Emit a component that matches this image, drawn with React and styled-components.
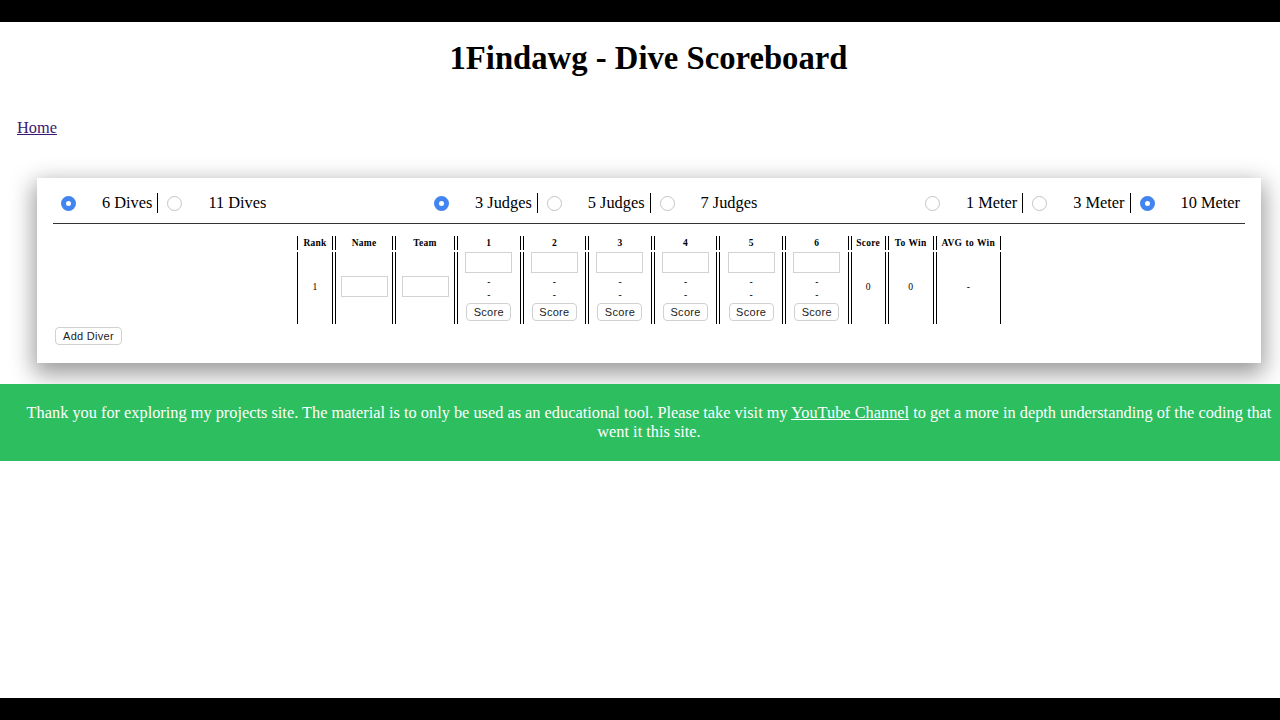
import React from "react";
import styled, { createGlobalStyle } from "styled-components";

const Global = createGlobalStyle`
  html, body { margin: 0; padding: 0; background: #fff; }
  body { font-family: "Liberation Serif", "Times New Roman", serif; color: #000; }
`;
const Frame = styled.div`
  display: flex; flex-direction: column; width: 1280px; height: 720px; overflow: hidden; background: #fff;
`;
const Letterbox = styled.div`
  flex: 0 0 22px; background: #000;
`;
const Page = styled.main`
  flex: 1; display: flex; flex-direction: column;
`;
const Title = styled.h1`
  margin: 0; padding: 16px 0 0 17px; height: 54px; box-sizing: content-box;
  font-size: 32.7px; line-height: 40px; font-weight: 700; text-align: center;
`;
const Nav = styled.nav`
  padding: 26px 0 0 17px; height: 60px; font-size: 16.35px; line-height: 20px;
`;
const HomeLink = styled.a`
  color: #3d1674; text-decoration: underline;
`;
const Card = styled.section`
  margin: 0 19px 0 37px; height: 185px; box-sizing: border-box; padding: 14px 16px 0;
  background: #fff; box-shadow: 0 8px 22px 3px rgba(0,0,0,.4);
`;
const OptionBar = styled.div`
  display: flex; justify-content: space-between; height: 31px; border-bottom: 1px solid #333;
`;
const OptionGroup = styled.div`
  display: flex; align-items: flex-start; padding-top: 1px;
`;
const Option = styled.label`
  display: flex; align-items: center; height: 20px; padding: 0 5px 0 ${p => p.$first ? 8 : 9}px;
  font-size: 16.35px; line-height: 20px; border-left: ${p => p.$first ? "0" : "1px solid #000"};
`;
const Radio = styled.input`
  appearance: none; width: 15px; height: 15px; margin: 0 26px 0 0; box-sizing: border-box; border-radius: 50%;
  background: #fff; border: 1px solid #c4c4c4; flex: none;
  &:checked { border: 5px solid #4285f0; background: #fff; }
`;
const ScoreTable = styled.table`
  margin: 10px auto 0; border-collapse: separate; border-spacing: 2px; width: 708px; table-layout: fixed;
  font-size: 9.6px;
`;
const Head = styled.th`
  height: 14px; padding: 0; border-left: 1px solid #000; border-right: 1px solid #000;
  font-size: 9.5px; line-height: 14px; font-weight: 700; letter-spacing: .25px; word-spacing: .6px;
  white-space: nowrap; width: ${p => p.$w}px;
`;
const Cell = styled.td`
  height: ${p => p.$stack ? 72 : 69}px; padding: 0 0 ${p => p.$stack ? 0 : 3}px; border-left: 1px solid #000; border-right: 1px solid #000;
  font-size: 9.6px; text-align: center; vertical-align: middle;
`;
const ScoreStack = styled.div`
  display: flex; flex-direction: column; align-items: center; height: 72px;
`;
const Dashes = styled.div`
  display: flex; flex-direction: column; margin-top: 2px;
`;
const Dash = styled.span`
  height: 13px; line-height: 13px;
`;
const Field = styled.input`
  display: block; width: 47px; height: 21px; margin: 0 auto; padding: 0; box-sizing: border-box;
  border: 1px solid #d2d2d2; background: #fff;
`;
const Button = styled.button`
  display: block; height: 18px; padding: 0; box-sizing: border-box; background: #fff;
  border: 1px solid #d0d0d0; border-radius: 4px; color: #222;
  font-family: "Liberation Sans", Arial, sans-serif; font-size: 11px; line-height: 16px; letter-spacing: .3px;
  width: ${p => p.$w}px;
`;
const ScoreButton = styled(Button)`
  margin-top: 2px;
`;
const AddButton = styled(Button)`
  margin: 1px 0 0 2px;
`;
const Footer = styled.footer`
  margin-top: 21px; height: 77px; box-sizing: border-box; padding: 19px 7px 0 25px;
  background: #2dbe5f; color: #fff; font-size: 16.33px; line-height: 19px; text-align: center;
`;
const FooterLink = styled.a`
  color: #fff; text-decoration: underline;
`;

const groups = [
  [["6 Dives", true], ["11 Dives", false]],
  [["3 Judges", true], ["5 Judges", false], ["7 Judges", false]],
  [["1 Meter", false], ["3 Meter", false], ["10 Meter", true]],
];
const dives = [1, 2, 3, 4, 5, 6];

export default function App() {
  return (
    <Frame>
      <Global />
      <Letterbox />
      <Page>
        <Title>1Findawg - Dive Scoreboard</Title>
        <Nav><HomeLink href="#">Home</HomeLink></Nav>
        <Card>
          <OptionBar>
            {groups.map((g, i) => (
              <OptionGroup key={i}>
                {g.map(([label, on], j) => (
                  <Option key={label} $first={j === 0}>
                    <Radio type="radio" name={`group${i}`} defaultChecked={on} />
                    {label}
                  </Option>
                ))}
              </OptionGroup>
            ))}
          </OptionBar>
          <ScoreTable>
            <thead>
              <tr>
                <Head $w={34}>Rank</Head>
                <Head $w={56}>Name</Head>
                <Head $w={58}>Team</Head>
                {dives.map(d => <Head key={d} $w={61.6}>{d}</Head>)}
                <Head $w={33}>Score</Head>
                <Head $w={44}>To Win</Head>
                <Head>AVG to Win</Head>
              </tr>
            </thead>
            <tbody>
              <tr>
                <Cell>1</Cell>
                <Cell><Field /></Cell>
                <Cell><Field /></Cell>
                {dives.map(d => (
                  <Cell key={d} $stack>
                    <ScoreStack>
                      <Field />
                      <Dashes>
                        <Dash>-</Dash>
                        <Dash>-</Dash>
                      </Dashes>
                      <ScoreButton $w={45}>Score</ScoreButton>
                    </ScoreStack>
                  </Cell>
                ))}
                <Cell>0</Cell>
                <Cell>0</Cell>
                <Cell>-</Cell>
              </tr>
            </tbody>
          </ScoreTable>
          <AddButton $w={67}>Add Diver</AddButton>
        </Card>
        <Footer>
          Thank you for exploring my projects site. The material is to only be used as an educational tool. Please take visit my <FooterLink href="#">YouTube Channel</FooterLink> to get a more in depth understanding of the coding that went it this site.
        </Footer>
      </Page>
      <Letterbox />
    </Frame>
  );
}
